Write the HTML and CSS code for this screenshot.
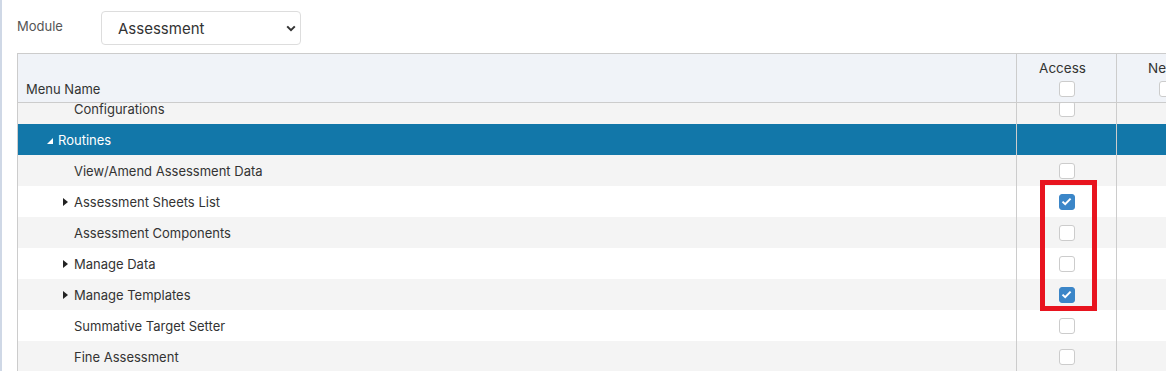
FILE: index.html
```html
<!DOCTYPE html>
<html>
<head>
<meta charset="utf-8">
<link rel="stylesheet" href="styles.css">
</head>
<body>
<div class="page">
  <div class="form-row">
    <label class="form-label">Module</label>
    <div class="select">
      <span>Assessment</span>
      <svg class="chev" width="10" height="7" viewBox="0 0 10 7"><path d="M1.2 1.4 L5 5.2 L8.8 1.4" fill="none" stroke="#333" stroke-width="2"/></svg>
    </div>
  </div>

  <div class="grid">
    <div class="row head">
      <div class="name">Menu Name</div>
      <div class="cell hcell"><span class="htext">Access</span><span class="cb"></span></div>
      <div class="cell hcell"><span class="htext">New</span><span class="cb"></span></div>
    </div>
    <div class="body">
      <div class="rows">
        <div class="row alt"><div class="name l2">Configurations</div><div class="cell"><span class="cb"></span></div><div class="cell"></div></div>
        <div class="row sel"><div class="name l1"><i class="open"></i>Routines</div><div class="cell"></div><div class="cell"></div></div>
        <div class="row alt"><div class="name l2">View/Amend Assessment Data</div><div class="cell"><span class="cb"></span></div><div class="cell"></div></div>
        <div class="row"><div class="name l2"><i class="closed"></i>Assessment Sheets List</div><div class="cell"><span class="cb on"><svg width="11" height="9" viewBox="0 0 11 9"><path d="M1.5 4.6 L4.2 7.2 L9.6 1.6" fill="none" stroke="#fff" stroke-width="2"/></svg></span></div><div class="cell"></div></div>
        <div class="row alt"><div class="name l2">Assessment Components</div><div class="cell"><span class="cb"></span></div><div class="cell"></div></div>
        <div class="row"><div class="name l2"><i class="closed"></i>Manage Data</div><div class="cell"><span class="cb"></span></div><div class="cell"></div></div>
        <div class="row alt"><div class="name l2"><i class="closed"></i>Manage Templates</div><div class="cell"><span class="cb on"><svg width="11" height="9" viewBox="0 0 11 9"><path d="M1.5 4.6 L4.2 7.2 L9.6 1.6" fill="none" stroke="#fff" stroke-width="2"/></svg></span></div><div class="cell"></div></div>
        <div class="row"><div class="name l2">Summative Target Setter</div><div class="cell"><span class="cb"></span></div><div class="cell"></div></div>
        <div class="row alt"><div class="name l2">Fine Assessment</div><div class="cell"><span class="cb"></span></div><div class="cell"></div></div>
      </div>
    </div>
  </div>
  <div class="highlight"></div>
</div>
</body>
</html>
```

FILE: styles.css
```css
html, body {
  margin: 0;
  padding: 0;
  background: #fff;
  overflow: hidden;
}
body {
  font-family: Inter, "Noto Sans", sans-serif;
  font-size: 13px;
  color: #333;
  width: 1166px;
  height: 371px;
}
.page {
  position: relative;
  border-left: 2px solid #cfd8e6;
  padding: 11px 0 0 15px;
  height: 360px;
  box-sizing: content-box;
}
.form-row {
  display: flex;
  align-items: center;
  height: 34px;
}
.form-label {
  width: 84px;
  color: #555;
  font-size: 13px;
  margin-top: -5px;
}
.select {
  box-sizing: border-box;
  width: 200px;
  height: 34px;
  border: 1px solid #ddd;
  border-radius: 4px;
  display: flex;
  align-items: center;
  justify-content: space-between;
  padding: 0 4px 0 16px;
  font-size: 15px;
  color: #333;
}
.chev { margin-top: 1px; }
.grid {
  margin-top: 8px;
  width: 1300px;
  border: 1px solid #cccccc;
  border-right: none;
  border-bottom: none;
}
.row {
  display: flex;
  height: 31px;
}
.row.alt { background: #f4f4f4; }
.row.sel { background: #1277a9; color: #fff; }
.name {
  width: 998px;
  flex: none;
  display: flex;
  align-items: center;
  box-sizing: border-box;
}
.cell {
  width: 100px;
  flex: none;
  box-sizing: border-box;
  border-left: 1px solid #cccccc;
  display: flex;
  align-items: center;
  justify-content: center;
}
.head {
  height: 48px;
  background: #f0f3f8;
  border-bottom: 1px solid #cccccc;
}
.head .name {
  align-items: flex-end;
  padding: 0 0 5px 8px;
}
.hcell {
  flex-direction: column;
  justify-content: flex-start;
  padding-top: 6px;
  gap: 5px;
}
.htext {
  line-height: 16px;
  padding-right: 8px;
  font-size: 13.5px;
}
.body {
  height: 300px;
  overflow: hidden;
}
.rows { margin-top: -10px; }
.l1 { padding-left: 29px; }
.l2 { padding-left: 56px; }
.closed {
  width: 0;
  height: 0;
  border-top: 4px solid transparent;
  border-bottom: 4px solid transparent;
  border-left: 5px solid #222;
  margin: 0 6px 0 -11px;
  display: inline-block;
}
.open {
  width: 0;
  height: 0;
  border-bottom: 6px solid #fff;
  border-left: 6px solid transparent;
  margin: 2px 5px 0 0;
  display: inline-block;
}
.cb {
  box-sizing: border-box;
  width: 16px;
  height: 16px;
  border: 1px solid #cccccc;
  border-radius: 3px;
  background: #fff;
  display: flex;
  align-items: center;
  justify-content: center;
}
.cb.on {
  background: #3b86c8;
  border-color: #3b86c8;
}
.highlight {
  position: absolute;
  left: 1038px;
  top: 180px;
  width: 57px;
  height: 131px;
  box-sizing: border-box;
  border: 5px solid #e8141f;
}
```
